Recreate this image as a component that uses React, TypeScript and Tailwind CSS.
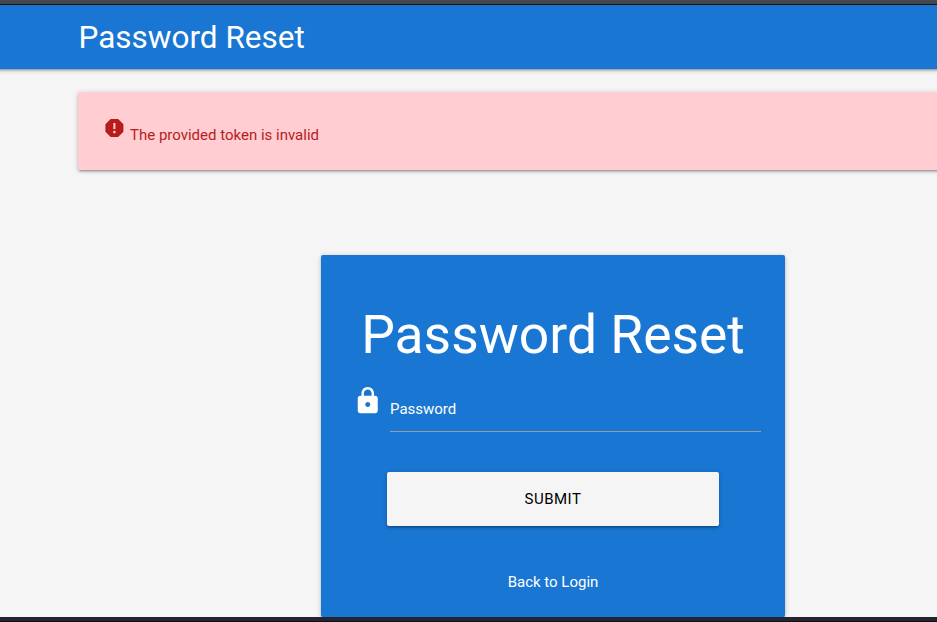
import { MdLock, MdReport } from "react-icons/md";

function Navbar({ title }: { title: string }) {
  return (
    <nav className="relative -mx-2 h-16 bg-[#1976d2] pl-[86.5px] pt-px shadow-[0_2px_2px_0_rgba(0,0,0,0.14),0_3px_1px_-2px_rgba(0,0,0,0.12),0_1px_5px_0_rgba(0,0,0,0.2)]">
      <span className="block text-[31.5px] leading-[64px] text-white">{title}</span>
    </nav>
  );
}

function ErrorPanel({ message }: { message: string }) {
  return (
    <div className="ml-[78px] mt-[23px] -mr-2 flex h-[78px] rounded-[2px] bg-[#ffcdd2] pl-[25px] text-[#b71c1c] shadow-[0_2px_2px_0_rgba(0,0,0,0.14),0_3px_1px_-2px_rgba(0,0,0,0.12),0_1px_5px_0_rgba(0,0,0,0.2)]">
      <MdReport className="-ml-px mt-[24px] size-6 translate-x-[0.4px]" />
      <span className="ml-1 mt-8 text-[15px] leading-[22px]">{message}</span>
    </div>
  );
}

function ResetCard() {
  return (
    <div className="ml-[321px] mt-[85px] flex h-[362px] w-[464px] flex-col rounded-[2px] bg-[#1976d2] text-white shadow-[0_2px_2px_0_rgba(0,0,0,0.14),0_3px_1px_-2px_rgba(0,0,0,0.12),0_1px_5px_0_rgba(0,0,0,0.2)]">
      <h2 className="mt-[50px] text-center text-[53.4px] leading-[60px]">Password Reset</h2>
      <div className="mt-[19px] flex pl-8">
        <MdLock className="mt-[2px] size-[30px] translate-x-[-0.25px] translate-y-[-0.25px]" />
        <label className="ml-[7px] h-[48px] w-[371px] border-b border-[#9e9e9e] pt-[14px] text-[15px] leading-[22px]">
          Password
        </label>
      </div>
      <button className="mx-auto mt-10 h-[54px] w-[332px] rounded-[2px] bg-[#f5f5f5] text-[15px] tracking-[0.5px] text-black shadow-[0_2px_2px_0_rgba(0,0,0,0.14),0_3px_1px_-2px_rgba(0,0,0,0.12),0_1px_5px_0_rgba(0,0,0,0.2)]">
        SUBMIT
      </button>
      <a href="#" className="mx-auto mt-[45px] text-[15px] leading-[22px]">
        Back to Login
      </a>
    </div>
  );
}

export default function App() {
  return (
    <div className="h-[622px] overflow-hidden bg-[#f5f5f5] font-[Roboto,sans-serif]">
      <div className="h-[5px] border-b border-[#15161a] bg-[#464950]" />
      <Navbar title="Password Reset" />
      <ErrorPanel message="The provided token is invalid" />
      <ResetCard />
      <div className="relative h-[5px] border-b border-[#101116] bg-[#22242e]" />
    </div>
  );
}
